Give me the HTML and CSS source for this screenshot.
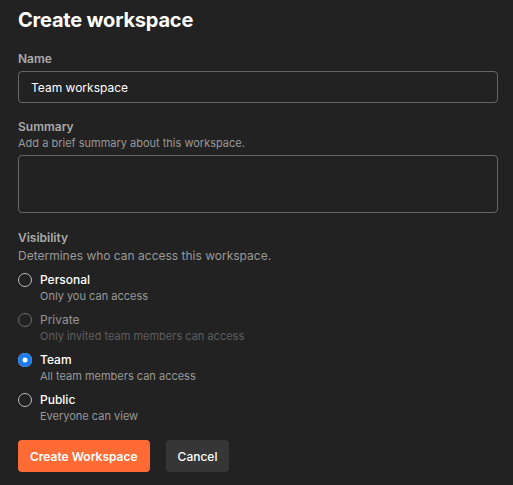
FILE: index.html
```html
<!DOCTYPE html>
<html lang="en">
<head>
  <meta charset="UTF-8">
  <meta name="viewport" content="width=device-width, initial-scale=1.0">
  <title>Create workspace</title>
  <link rel="stylesheet" href="styles.css">
</head>
<body>
  <div class="page">
    <h1>Create workspace</h1>
    <form class="ws-form">
      <div class="field">
        <label for="name">Name</label>
        <input type="text" id="name" value="Team workspace">
      </div>

      <div class="field field-summary">
        <label for="summary">Summary</label>
        <p class="hint">Add a brief summary about this workspace.</p>
        <textarea id="summary"></textarea>
      </div>

      <div class="field">
        <span class="label">Visibility</span>
        <p class="hint hint-lg">Determines who can access this workspace.</p>
        <div class="options">
          <label class="option">
            <input type="radio" name="visibility" value="personal">
            <span class="radio"></span>
            <span class="option-text">
              <span class="option-title">Personal</span>
              <span class="option-desc">Only you can access</span>
            </span>
          </label>
          <label class="option disabled">
            <input type="radio" name="visibility" value="private" disabled>
            <span class="radio"></span>
            <span class="option-text">
              <span class="option-title">Private</span>
              <span class="option-desc">Only invited team members can access</span>
            </span>
          </label>
          <label class="option">
            <input type="radio" name="visibility" value="team" checked>
            <span class="radio"></span>
            <span class="option-text">
              <span class="option-title">Team</span>
              <span class="option-desc">All team members can access</span>
            </span>
          </label>
          <label class="option">
            <input type="radio" name="visibility" value="public">
            <span class="radio"></span>
            <span class="option-text">
              <span class="option-title">Public</span>
              <span class="option-desc">Everyone can view</span>
            </span>
          </label>
        </div>
      </div>

      <div class="actions">
        <button type="submit" class="btn btn-primary">Create Workspace</button>
        <button type="button" class="btn btn-secondary">Cancel</button>
      </div>
    </form>
  </div>
</body>
</html>
```

FILE: styles.css
```css
/* Reset */
* {
  box-sizing: border-box;
  margin: 0;
  padding: 0;
}

body {
  font-family: Inter, 'Noto Sans', Arial, sans-serif;
  background: #222;
  color: #fff;
}

.page {
  padding: 6px 16px 0 18px;
}

h1 {
  font-size: 20px;
  font-weight: 700;
  line-height: 28px;
  letter-spacing: -0.2px;
  margin-bottom: 17px;
}

/* Felder */
.field {
  display: flex;
  flex-direction: column;
  margin-bottom: 16px;
}

.field-summary {
  margin-bottom: 17px;
}

.field > label,
.field > .label {
  font-size: 12px;
  font-weight: 600;
  color: #aaa;
  line-height: 16px;
  margin-bottom: 4px;
}

.hint {
  font-size: 11px;
  color: #999;
  line-height: 14px;
  margin-top: -3px;
  margin-bottom: 5px;
}

.hint-lg {
  font-size: 12px;
  line-height: 16px;
  margin-top: -2px;
  margin-bottom: 8px;
}

.field input[type="text"],
.field textarea {
  width: 480px;
  background: #222;
  border: 1px solid #666;
  border-radius: 4px;
  color: #fff;
  font-family: inherit;
  font-size: 12px;
  outline: none;
}

.field input[type="text"] {
  height: 32px;
  padding: 0 12px;
}

.field textarea {
  height: 58px;
  resize: none;
  padding: 8px 12px;
}

/* Radio-Optionen */
.options {
  display: flex;
  flex-direction: column;
  gap: 8px;
}

.option {
  display: flex;
  align-items: flex-start;
  gap: 8px;
  cursor: pointer;
}

.option input {
  display: none;
}

.radio {
  width: 14px;
  height: 14px;
  border: 1.5px solid #bbb;
  border-radius: 50%;
  margin-top: 1px;
  flex-shrink: 0;
}

.option input:checked + .radio {
  background: #fff;
  border: none;
  box-shadow: inset 0 0 0 4.5px #1a7cf0;
}

.option-text {
  display: flex;
  flex-direction: column;
}

.option-title {
  font-size: 12px;
  font-weight: 500;
  color: #fff;
  line-height: 16px;
}

.option-desc {
  font-size: 11px;
  font-weight: 400;
  color: #999;
  line-height: 16px;
}

.option.disabled {
  opacity: 0.5;
  cursor: default;
}

.option.disabled .option-title {
  font-weight: 400;
}

/* Buttons */
.actions {
  display: flex;
  gap: 16px;
  margin-top: 1px;
}

.btn {
  height: 32px;
  padding: 0 12px;
  border: none;
  border-radius: 4px;
  font-family: inherit;
  font-size: 12px;
  font-weight: 600;
  color: #fff;
  cursor: pointer;
}

.btn-primary {
  background: #ff6b35;
}

.btn-secondary {
  background: #363636;
  font-weight: 500;
}
```
